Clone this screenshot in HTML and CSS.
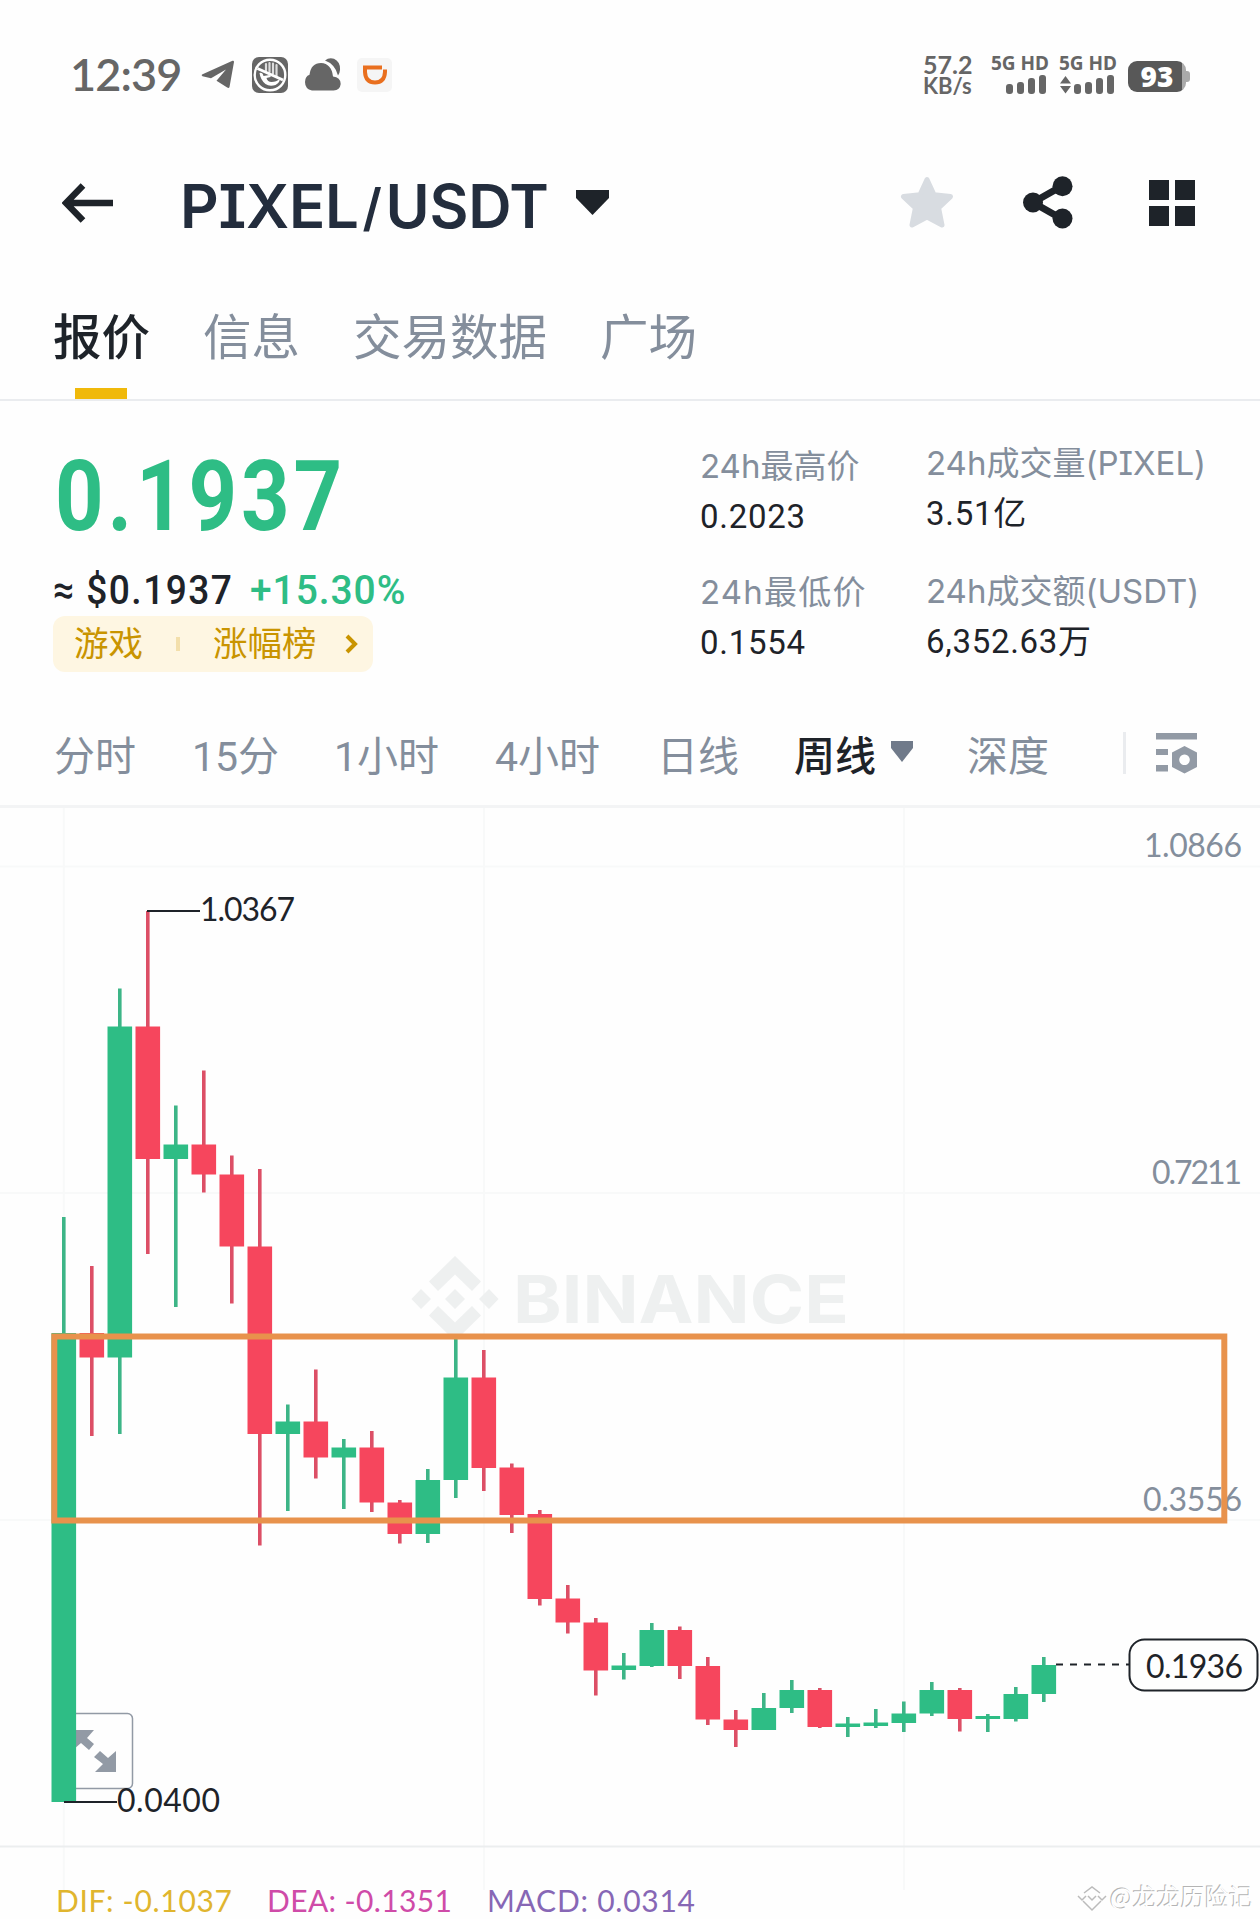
FILE: index.html
```html
<!DOCTYPE html>
<html lang="zh-CN">
<head>
    <meta charset="UTF-8">
    <meta name="viewport" content="width=device-width, initial-scale=1.0">
    <title>PIXEL/USDT</title>
    <link rel="stylesheet" href="styles.css">
</head>
<body>

    <div class="status-bar">
        <span class="clock">12:39</span>
        <svg class="status-icon telegram" width="34" height="30" viewBox="0 0 34 30">
            <path d="M1 14.5 31.500 .8Q33 .3 33 2L28.500 27Q28 28.800 26.200 27.600L15.500 20.800 25 9.500 10 18.200 1.500 16.200Q0 15.400 1 14.500Z" fill="#666"/>
        </svg>
        <svg class="status-icon hand" width="36" height="36" viewBox="0 0 36 36">
            <rect x="0" y="0" width="36" height="36" rx="7" fill="#666"/>
            <circle cx="18" cy="18" r="15.300" fill="none" stroke="#fff" stroke-width="2.400"/>
            <path d="M14 7v7M17.500 6v9M21 6.500v10M24.500 8v11" stroke="#ddd" stroke-width="2.200" stroke-linecap="round"/>
            <path d="M5.500 11.500 31 23" stroke="#fff" stroke-width="3"/>
            <path d="M7.500 16q3-1 4 3l6-1q2 1 1 2l-4 1q1 4 5 4 5 0 8-3 1 3-4 6-6 2-10-1-5-4-6-11z" fill="#fff"/>
        </svg>
        <svg class="status-icon cloud" width="36" height="33" viewBox="0 0 36 33">
            <path d="M20 2.500Q24-.8 29 .8 35.500 4 35 12 34.800 15 33 17.500 30 6 20 2.500Z" fill="#666"/>
            <path d="M7 32.500Q0 31 0 24 0 18.500 4.500 16.800 6 5 16 5 26.500 5.500 28 18.500 35.500 19 35.700 26 35 32 28.500 32.500Z" fill="#666"/>
        </svg>
        <span class="didi">
            <svg width="24" height="20" viewBox="0 0 24 20">
                <path d="M19 2.500H2V7Q2.500 17.500 12 17.500T22 7V4.500" fill="none" stroke="#e96f1e" stroke-width="4"/>
            </svg>
        </span>

        <div class="net-speed"><b>57.2</b><span>KB/s</span></div>
        <div class="signal">
            <b>5G HD</b>
            <div class="bars"><i class="b1"></i><i class="b2"></i><i class="b3"></i><i class="b4"></i></div>
        </div>
        <div class="signal">
            <b>5G HD</b>
            <div class="bars">
                <svg width="11" height="19" viewBox="0 0 11 19"><path d="M5.500 1 11 8.500H0ZM5.500 18.500 11 11H0Z" fill="#666"/></svg>
                <i class="b1"></i><i class="b2"></i><i class="b3"></i><i class="b4"></i>
            </div>
        </div>
        <div class="battery"><span>93</span></div>
    </div>

    <div class="header">
        <svg class="back" width="52" height="40" viewBox="0 0 52 40">
            <path d="M21 2.500 4 20 21 37.500M4 20H51" fill="none" stroke="#1e2329" stroke-width="6.500"/>
        </svg>
        <h1>PIXEL<span>/</span>USDT</h1>
        <svg class="caret" width="33" height="25" viewBox="0 0 33 25"><path d="M0 0H33V8L16.500 25 0 8Z" fill="#1e2329"/></svg>
        <svg class="star" width="54" height="54" viewBox="0 0 54 54">
            <path d="M27 3.500 34 18.800 50.500 20.600 38.600 32 42 49 27 41 12 49 15.400 32 3.500 20.600 20 18.800Z" fill="#d8dce1" stroke="#d8dce1" stroke-width="5" stroke-linejoin="round"/>
        </svg>
        <svg class="share" width="50" height="53" viewBox="0 0 50 53">
            <path d="M39 10 10 26.500 39 43" fill="none" stroke="#1e2329" stroke-width="7"/>
            <circle cx="39.500" cy="10.300" r="10" fill="#1e2329"/>
            <circle cx="10" cy="26.500" r="10" fill="#1e2329"/>
            <circle cx="39.500" cy="42.500" r="10" fill="#1e2329"/>
        </svg>
        <div class="grid-icon"><i></i><i></i><i></i><i></i></div>
    </div>

    <div class="tabs">
        <div class="tab active">报价</div>
        <div class="tab">信息</div>
        <div class="tab">交易数据</div>
        <div class="tab">广场</div>
    </div>

    <div class="ticker">
        <div class="price-box">
            <div class="price">0.1937</div>
            <div class="sub-price"><span class="usd">≈ $0.1937</span><span class="change">+15.30%</span></div>
            <div class="tags">
                <span>游戏</span>
                <i></i>
                <span>涨幅榜</span>
                <svg width="13" height="20" viewBox="0 0 13 20"><path d="M2 2 10 10 2 18" fill="none" stroke="#c99400" stroke-width="4"/></svg>
            </div>
        </div>
        <div class="stats">
            <div class="stat">
                <div class="label">24h最高价</div>
                <div class="value">0.2023</div>
            </div>
            <div class="stat">
                <div class="label low">24h最低价</div>
                <div class="value">0.1554</div>
            </div>
        </div>
        <div class="stats volume">
            <div class="stat">
                <div class="label">24h成交量(PIXEL)</div>
                <div class="value">3.51亿</div>
            </div>
            <div class="stat">
                <div class="label">24h成交额(USDT)</div>
                <div class="value">6,352.63万</div>
            </div>
        </div>
    </div>

    <div class="intervals">
        <span>分时</span>
        <span>15分</span>
        <span>1小时</span>
        <span>4小时</span>
        <span>日线</span>
        <span class="active">周线<svg width="22" height="22" viewBox="0 0 22 22"><path d="M0 0H22V7L11 21 0 7Z" fill="#707a8a"/></svg></span>
        <span>深度</span>
        <i class="divider"></i>
        <svg class="settings" width="42" height="42" viewBox="0 0 42 42">
            <path d="M0 1H41V7.500H0ZM0 17H12V23H0ZM0 33H12V39.500H0Z" fill="#929aa5"/>
            <path fill-rule="evenodd" d="M28.500 14 41 20.500V35L28.500 41.500 16 35V20.500ZM28.500 22.500a5.300 5.300 0 1 0 .01 0Z" fill="#929aa5"/>
        </svg>
    </div>

    <!-- y in the viewBox starts at 808 -->
    <svg class="chart" width="1260" height="1111" viewBox="0 808 1260 1111">
        <g class="grid-lines">
            <path d="M0 866.500H1260M0 1193H1260M0 1520H1260M63.800 808V1890M484 808V1890M904 808V1890"/>
        </g>
        <path class="pane-line" d="M0 1846.500H1260"/>

        <g class="watermark">
            <path d="M455 1256 481 1281.500 472 1291 455 1274.500 438 1291 429 1281.500ZM455 1341 481 1315.500 472 1306 455 1322.500 438 1306 429 1315.500ZM455 1289 465 1299 455 1309 445 1299ZM421 1289 431 1299 421 1309 411.500 1299ZM489 1289 498.500 1299 489 1309 479 1299Z"/>
            <text x="513" y="1322.500" textLength="336" lengthAdjust="spacingAndGlyphs">BINANCE</text>
        </g>

        <g class="expand">
            <rect x="56" y="1713.500" width="76.500" height="75" rx="5"/>
            <path d="M74 1730H94L87 1738 94 1744 89 1750 81 1743 74 1749ZM116 1772H95L103 1764 94 1757 100 1751 108 1758 116 1751Z"/>
        </g>

        <g class="y-labels">
            <text x="1144" y="857" textLength="98">1.0866</text>
            <text x="1152" y="1184" textLength="90">0.7211</text>
            <text x="1143" y="1511" textLength="99">0.3556</text>
        </g>

        <g id="candles"></g>

        <g class="marks">
            <path d="M147 911H200M64 1802H117"/>
            <text x="200" y="920.500" textLength="95">1.0367</text>
            <text x="117" y="1811.500" textLength="103">0.0400</text>
        </g>

        <rect class="zone" x="54.300" y="1336.500" width="1170" height="184"/>

        <path class="last-line" d="M1056 1664.500H1129"/>
        <rect class="last-box" x="1129.500" y="1639.500" width="128" height="51" rx="15"/>
        <text class="last-text" x="1146" y="1678" textLength="97">0.1936</text>

        <g class="macd">
            <text class="dif" x="56" y="1912" textLength="176">DIF: -0.1037</text>
            <text class="dea" x="267" y="1912" textLength="185">DEA: -0.1351</text>
            <text class="hist" x="487" y="1912" textLength="208">MACD: 0.0314</text>
        </g>

        <g class="author">
            <path d="M1084 1893 1092 1887 1100 1893M1083 1901 1092 1910 1101 1901M1088 1896 1092 1900 1096 1896M1078 1896 1082 1900 1086 1896M1098 1896 1102 1900 1106 1896"/>
            <text x="1110" y="1906" textLength="143">@龙龙历险记</text>
        </g>
    </svg>

    <script>
        // [high, body top, body bottom, low, up = 1 / down = 0]
        const candles = [
            [1217, 1333, 1802, 1802, 1],
            [1266, 1333, 1357.5, 1436, 0],
            [988.5, 1026.5, 1357.5, 1434, 1],
            [911, 1026.5, 1159, 1254, 0],
            [1105.5, 1144.5, 1159, 1307, 1],
            [1070.5, 1144.5, 1174.5, 1192.5, 0],
            [1155.5, 1174.5, 1246.5, 1303.5, 0],
            [1169, 1246.5, 1434, 1545.5, 0],
            [1404.5, 1421.5, 1434, 1511, 1],
            [1369.5, 1421.5, 1457.5, 1478.5, 0],
            [1439, 1447.5, 1457.5, 1509, 1],
            [1431, 1447.5, 1502.5, 1512, 0],
            [1500, 1502.5, 1534, 1543.5, 0],
            [1469, 1480, 1534, 1543, 1],
            [1338, 1377.5, 1480, 1498, 1],
            [1350, 1377.5, 1468, 1491, 0],
            [1463.5, 1467.5, 1515, 1533, 0],
            [1510, 1514, 1599, 1605.5, 0],
            [1585, 1598.5, 1622.5, 1633.5, 0],
            [1618, 1622.5, 1670.5, 1695.5, 0],
            [1653, 1665.5, 1670, 1679.5, 1],
            [1623, 1630, 1666, 1667, 1],
            [1626.5, 1630, 1666, 1679, 0],
            [1657, 1666, 1719.5, 1725, 0],
            [1710, 1719.5, 1730, 1747, 0],
            [1693, 1708, 1730, 1730, 1],
            [1680, 1690, 1708, 1713, 1],
            [1688, 1690, 1727, 1728, 0],
            [1717, 1723.5, 1727, 1737, 1],
            [1709, 1722.5, 1726, 1728, 1],
            [1701.5, 1713.5, 1723, 1732, 1],
            [1682, 1690, 1713.5, 1716, 1],
            [1688, 1690, 1719, 1731.5, 0],
            [1714, 1716, 1719, 1732, 1],
            [1687, 1694, 1719, 1721.5, 1],
            [1657, 1665, 1694, 1702, 1]
        ];

        let html = '';
        candles.forEach((c, i) => {
            const x = 63.8 + i * 28;
            const type = c[4] ? 'up' : 'down';
            html += `<rect class="wick ${type}" x="${x - 1.8}" y="${c[0]}" width="3.6" height="${c[3] - c[0]}"/>`;
            html += `<rect class="${type}" x="${x - 12.3}" y="${c[1]}" width="24.6" height="${c[2] - c[1]}"/>`;
        });
        document.getElementById('candles').innerHTML = html;
    </script>

</body>
</html>
```
FILE: styles.css
```css
body {
    margin: 0;
    width: 1260px;
    height: 1919px;
    overflow: hidden;
    background-color: #fefefe;
    font-family: Roboto, "Noto Sans CJK SC", sans-serif;
    color: #1e2329;
}

svg {
    display: block;
    flex-shrink: 0;
}

/* Status bar */
.status-bar {
    display: flex;
    align-items: center;
    height: 149px;
    padding-left: 70px;
    box-sizing: border-box;
    color: #666;
}

.clock {
    width: 131px;
    margin-top: -2px;
    font-family: Lato, sans-serif;
    font-weight: 600;
    font-size: 45px;
    letter-spacing: -0.9px;
}

.hand {
    margin-left: 17px;
}

.cloud {
    margin-left: 17px;
}

.didi {
    display: flex;
    align-items: center;
    justify-content: center;
    width: 35px;
    height: 34px;
    margin-left: 16px;
    border-radius: 5px;
    background-color: #f5f5f5;
}

.net-speed {
    width: 51px;
    margin-left: 531px;
    font-family: Lato, sans-serif;
}

.net-speed b,
.net-speed span {
    display: block;
    line-height: 22px;
}

.net-speed b {
    font-weight: 700;
    font-size: 25px;
}

.net-speed span {
    font-weight: 700;
    font-size: 22px;
}

.signal {
    width: 58px;
    margin-left: 17px;
}

.signal + .signal {
    margin-left: 10px;
}

.signal b {
    display: block;
    margin-top: -2px;
    font-family: "Noto Sans", sans-serif;
    font-size: 19px;
    line-height: 18px;
    white-space: nowrap;
}

.bars {
    display: flex;
    justify-content: flex-end;
    align-items: flex-end;
    gap: 4px;
    height: 20px;
    margin-top: 2px;
    margin-right: 3px;
}

.bars svg {
    margin-right: -1px;
}

.bars i {
    width: 7px;
    border-radius: 3px;
    background-color: #666;
}

.b1 { height: 10px; }
.b2 { height: 12px; }
.b3 { height: 16px; }
.b4 { height: 19px; }

.battery {
    position: relative;
    width: 58px;
    height: 31px;
    margin-top: 3px;
    margin-left: 11px;
    border-radius: 9px;
    background: linear-gradient(90deg, #585858 54px, #aaa 54px);
    color: #fff;
    font-family: "Open Sans", sans-serif;
    font-weight: 800;
    font-size: 28px;
    line-height: 31px;
    text-align: center;
}

.battery::after {
    content: "";
    position: absolute;
    right: -4px;
    top: 10px;
    width: 5px;
    height: 11px;
    border-radius: 0 3px 3px 0;
    background-color: #aaa;
}

/* Header */
.header {
    display: flex;
    align-items: center;
    height: 107px;
    padding-left: 62px;
}

h1 {
    width: 379px;
    margin: 8px 0 0 66px;
    font-family: Inter, sans-serif;
    font-feature-settings: "cv08";
    font-weight: 600;
    font-size: 60px;
    line-height: 70px;
    letter-spacing: -0.3px;
    white-space: nowrap;
    color: #232d3d;
}

h1 span {
    font-size: 51px;
    margin: 0 4px;
    vertical-align: 2px;
}

.caret {
    margin-left: 17px;
}

.star {
    margin-left: 291px;
}

.share {
    margin-left: 69px;
}

.grid-icon {
    display: grid;
    grid-template-columns: 20px 20px;
    gap: 6px;
    margin-left: 76px;
}

.grid-icon i {
    height: 20px;
    background-color: #1e2329;
}

/* Tabs */
.tabs {
    display: flex;
    gap: 53px;
    height: 143px;
    padding-left: 53px;
    border-bottom: 2px solid #eaecef;
    font-family: "Noto Sans CJK SC", sans-serif;
    font-size: 48.5px;
    line-height: 157px;
    color: #848e9c;
}

.tab {
    position: relative;
}

.tab.active {
    color: #1e2329;
    font-weight: 500;
}

.tab.active::after {
    content: "";
    position: absolute;
    left: 22px;
    bottom: 0;
    width: 52px;
    height: 11px;
    background-color: #f0b90b;
}

/* Price and 24h stats */
.ticker {
    display: flex;
    height: 309px;
}

.price-box {
    width: 647px;
    padding-left: 53px;
}

/* condensed digits */
.price {
    width: 400px;
    height: 100px;
    margin: 46px 0 -1px 2px;
    font-size: 98px;
    font-weight: 700;
    line-height: 100px;
    letter-spacing: 4.5px;
    transform: scaleX(0.865);
    transform-origin: 0 0;
    color: #2ebd85;
}

.sub-price {
    display: flex;
    height: 70px;
    font-size: 41px;
    font-weight: 500;
    line-height: 89px;
    letter-spacing: 1.6px;
    white-space: nowrap;
}

.usd {
    width: 197px;
    transform: scaleX(0.905);
    transform-origin: 0 0;
}

.change {
    letter-spacing: 1px;
    transform: scaleX(0.95);
    transform-origin: 0 0;
    color: #2ebd85;
}

.tags {
    display: flex;
    align-items: center;
    width: 320px;
    height: 56px;
    box-sizing: border-box;
    padding-left: 21px;
    border-radius: 12px;
    background-color: #fef6e2;
    font-size: 34.5px;
    line-height: 50px;
    color: #c99400;
}

.tags span {
    margin-top: 0;
}

.tags i {
    width: 4px;
    height: 14px;
    margin: 0 33px;
    background-color: #f3dfab;
}

.tags svg {
    margin-left: 28px;
}

.stats {
    width: 226px;
    padding-top: 42px;
}

.stats.volume {
    width: auto;
    padding-top: 39px;
}

.stat {
    height: 126px;
}

.volume .stat {
    height: 128px;
}

.label {
    font-family: Inter, "Noto Sans CJK SC", sans-serif;
    font-feature-settings: "cv08";
    font-size: 33px;
    line-height: 46px;
    letter-spacing: 0;
    color: #848e9c;
    white-space: nowrap;
}

.label.low {
    letter-spacing: 1.2px;
}

.value {
    margin-top: 5px;
    font-size: 33px;
    line-height: 46px;
    letter-spacing: 0.7px;
}

/* Intervals */
.intervals {
    display: grid;
    grid-template-columns: 138px 142px 161px 162px 137px 173px 156px 33px auto;
    align-items: center;
    height: 85px;
    padding-left: 54px;
    padding-bottom: 10px;
    border-bottom: 3px solid #f3f4f5;
    font-size: 41px;
    color: #848e9c;
}

.intervals .active {
    display: flex;
    gap: 15px;
    color: #1e2329;
    font-weight: 500;
}

.intervals .active svg {
    margin-top: 18px;
}

.divider {
    width: 3px;
    height: 42px;
    background-color: #eaecef;
}

/* Chart */
.chart {
    font-family: Lato, sans-serif;
}

.grid-lines path {
    fill: none;
    stroke: #f8f9f9;
    stroke-width: 2;
}

.pane-line {
    stroke: #eceeef;
    stroke-width: 2;
}

.watermark {
    fill: #eef0f0;
    font-family: Inter, sans-serif;
    font-size: 66px;
    font-weight: 700;
}

.expand rect {
    fill: #fefefe;
    stroke: #929aa5;
    stroke-width: 1.5;
}

.expand path {
    fill: #929aa5;
}

.y-labels {
    font-size: 32px;
    fill: #848e9c;
}

.up {
    fill: #2ebd85;
}

.down {
    fill: #f6465d;
}

.wick.up {
    fill: #3db587;
}

.wick.down {
    fill: #dc4f66;
}

.marks path {
    stroke: #1e2329;
    stroke-width: 2;
}

.marks text,
.last-text {
    font-size: 32px;
    fill: #1e2329;
}

.zone {
    fill: none;
    stroke: #e8924c;
    stroke-width: 6;
}

.last-line {
    stroke: #1e2329;
    stroke-width: 2;
    stroke-dasharray: 7 7;
}

.last-box {
    fill: #fefefe;
    stroke: #1e2329;
    stroke-width: 2;
}

.macd {
    font-size: 30px;
}

.dif { fill: #e0b52e; }
.dea { fill: #cf4ba8; }
.hist { fill: #8767b5; }

.author path {
    fill: none;
    stroke: #bbb;
    stroke-width: 1.5;
}

.author text {
    font-family: "Noto Sans CJK SC", sans-serif;
    font-size: 24px;
    fill: #fff;
    text-shadow: -1px -1px 0 #b4b4b4;
}
```
